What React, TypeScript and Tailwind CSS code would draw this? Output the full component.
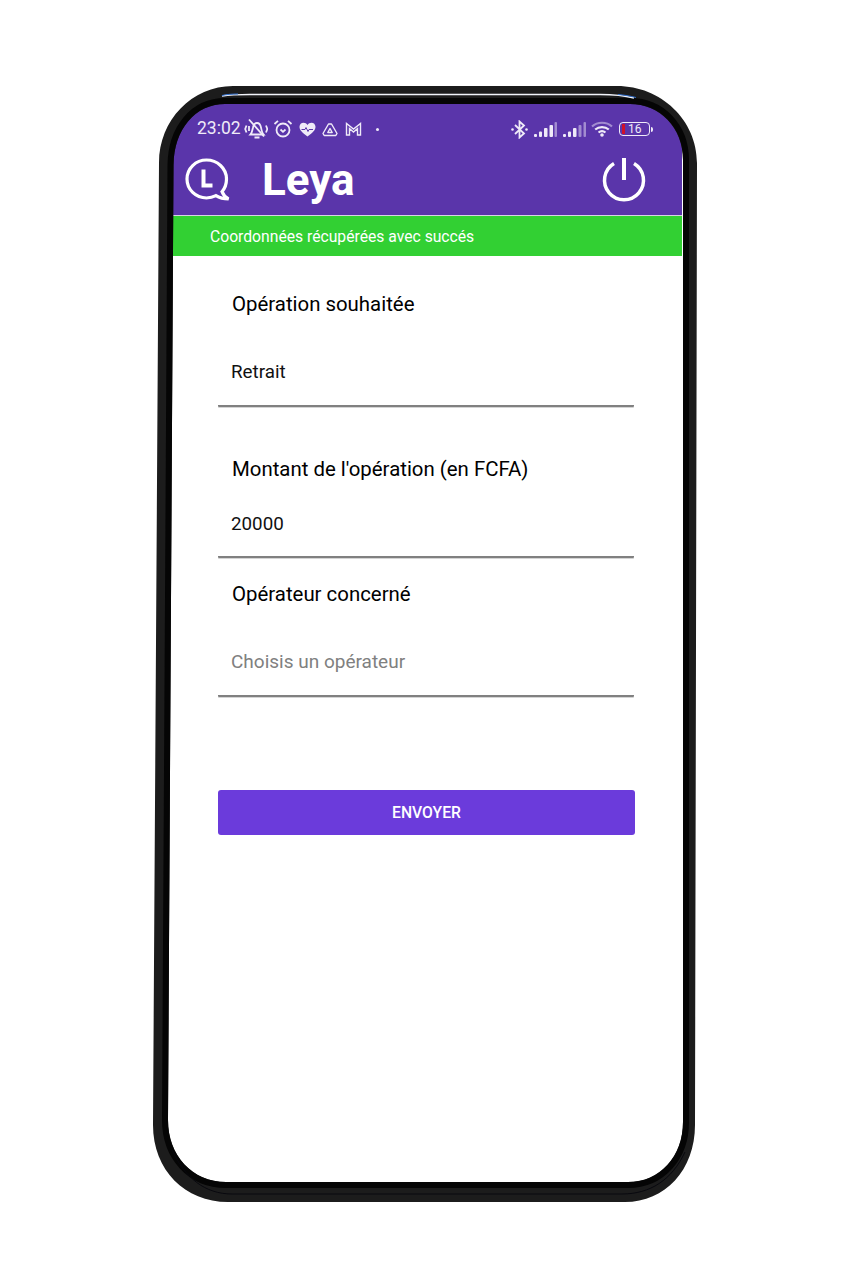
const font = { fontFamily: "Roboto, sans-serif" };

const StatusIcons = () => (
  <div className="flex items-center h-[48px] pt-[2px] pl-[24px] pr-[29px] text-white">
    <span className="text-[17.500px] leading-none text-[#efeaf8]">23:02</span>
    <svg width="24" height="22" viewBox="0 0 24 22" fill="none" stroke="#efeaf8" strokeWidth="1.800" className="ml-[3px]">
      <path d="M6.500 16.500c1.500-1.500 2-5 2.500-7 .5-2.500 2-4.500 4-4.500s3.500 2 4 4.500c.4 2 1 5.500 2.500 7z" />
      <path d="M10.500 19.500h5M5 1.500l15 17M2.500 7.500 1.200 11l1.300 3.500M5 8v5M22 7.500l1.300 3.500-1.300 3.500" />
    </svg>
    <svg width="20" height="20" viewBox="0 0 20 20" fill="none" stroke="#efeaf8" strokeWidth="1.800" className="ml-[5px]">
      <circle cx="10" cy="11" r="6.500" />
      <path d="M7.500 10.500 10 12.800l2.500-2.300M1.500 5 5 1.800M18.500 5 15 1.800" />
    </svg>
    <svg width="17" height="15" viewBox="0 0 17 15" className="ml-[6px]">
      <path d="M8.500 14.500C3 10.500.5 8 .5 4.800.5 2.300 2.400.7 4.500.7c1.700 0 3.100.8 4 2.200.9-1.400 2.300-2.200 4-2.200 2.100 0 4 1.600 4 4.100 0 3.200-2.500 5.700-8 9.700z" fill="#efeaf8" />
      <path d="M2.500 7.500h3.500l1-2 2 4 1-2h4" fill="none" stroke="#5b36aa" strokeWidth="1" />
    </svg>
    <svg width="16" height="15" viewBox="0 0 16 15" fill="none" stroke="#efeaf8" strokeWidth="1.400" strokeLinejoin="round" className="ml-[6px]">
      <path d="M6.500 2 1 11.500 2.200 13.500h11.600L15 11.500 9.500 2z" />
      <path d="M8 6.500 5.800 10.500h4.400z" />
    </svg>
    <svg width="17" height="14" viewBox="0 0 17 14" fill="none" stroke="#efeaf8" strokeWidth="1.400" className="ml-[7px]">
      <path d="M1.500 13V1.500L8.500 7l7-5.500V13h-3V6.500L8.500 10 4.500 6.500V13z" />
    </svg>
    <span className="ml-[14px] w-[3px] h-[3px] rounded-full bg-[#efeaf8]" />
    <div className="ml-auto flex items-center">
      <svg width="17" height="19" viewBox="0 0 17 19" fill="none" stroke="#efeaf8" strokeWidth="1.800">
        <path d="M4 5l9 8.500-4.500 4V1.500l4.500 4L4 14" />
        <circle cx="1.500" cy="9.500" r="1.300" fill="#efeaf8" stroke="none" />
        <circle cx="15.500" cy="9.500" r="1.300" fill="#efeaf8" stroke="none" />
      </svg>
      <svg width="23" height="15" viewBox="0 0 23 15" className="ml-[6px]">
        <rect x="0" y="12" width="3" height="3" rx="1" fill="#efeaf8" />
        <rect x="5" y="9.500" width="3" height="5.500" rx="1" fill="#efeaf8" />
        <rect x="10" y="6" width="3.500" height="9" rx="1" fill="#efeaf8" />
        <rect x="15.500" y="3" width="3.500" height="12" rx="1" fill="#efeaf8" />
        <rect x="20.500" y="0" width="2.500" height="15" rx="1" fill="#a28cd0" />
      </svg>
      <svg width="23" height="15" viewBox="0 0 23 15" className="ml-[6px]">
        <rect x="0" y="12" width="3" height="3" rx="1" fill="#efeaf8" />
        <rect x="5" y="9.500" width="3" height="5.500" rx="1" fill="#efeaf8" />
        <rect x="10" y="6" width="3.500" height="9" rx="1" fill="#efeaf8" />
        <rect x="15.500" y="3" width="3" height="12" rx="1" fill="#a28cd0" />
        <rect x="20.500" y="0" width="2.500" height="15" rx="1" fill="#a28cd0" />
      </svg>
      <svg width="22" height="16" viewBox="0 0 22 16" fill="none" strokeWidth="2.200" className="ml-[5px]">
        <path d="M1 5.500c5.500-5 14.500-5 20 0" stroke="#a28cd0" />
        <path d="M4.200 8.500c3.800-3.300 9.800-3.300 13.600 0" stroke="#efeaf8" />
        <path d="M7.500 11.500c2-1.600 5-1.600 7 0" stroke="#efeaf8" />
        <circle cx="11" cy="14" r="1.800" fill="#efeaf8" />
      </svg>
      <div className="ml-[6px] flex items-center">
        <div className="w-[31px] h-[14px] rounded-[4px] border border-[#efeaf8] flex items-center pl-[2px]">
          <span className="w-[3px] h-[10px] bg-[#d0102a]" />
          <span className="ml-[3px] text-[12px] leading-none text-[#efeaf8]">16</span>
        </div>
        <span className="ml-[1px] w-[2px] h-[5px] rounded-r-sm bg-[#efeaf8]" />
      </div>
    </div>
  </div>
);

const Logo = () => (
  <svg width="46" height="44" viewBox="0 0 46 44" fill="none" stroke="white" strokeWidth="3.200">
    <path d="M21.500 2C10.700 2 2 10.400 2 21s8.700 19 19.500 19c3.400 0 6.600-.8 9.400-2.300 3.800 2.400 8.300 3.300 12.600 3.300-3.300-1.800-5.300-4.200-6.500-7.300C40 30.300 41.500 25.800 41.500 21 41.500 10.400 32.300 2 21.500 2z" />
    <path d="M18.500 11.500V27.500h9" strokeWidth="4" />
  </svg>
);

const PowerIcon = () => (
  <svg width="46" height="46" viewBox="0 0 46 46" fill="none" stroke="white" strokeWidth="3.500" className="ml-auto">
    <path d="M13 6.500A19.500 19.500 0 1 0 33 6.500" />
    <path d="M23 1V23" strokeWidth="4" />
  </svg>
);

const Field = ({ label, value, placeholder, top, gap }: { label: string; value: string; placeholder?: boolean; top: string; gap: string }) => (
  <div className={top}>
    <div className="pl-[59px] text-[20.400px] leading-[24px] text-black">{label}</div>
    <div className={`${gap} ml-[45px] w-[416px] border-b-2 border-[#808080] rounded-b-[1px] shadow-[0_1px_0_#d4d4d4]`}>
      <div className={`pl-[13px] h-[24px] leading-[24px] ${placeholder ? "text-[19px] text-[#808080]" : "text-[18.800px] text-[#111]"}`}>{value}</div>
    </div>
  </div>
);

// bezel sits over the screen, the body is very slightly skewed in the photo
const Bezel = () => (
  <svg width="853" height="1280" viewBox="0 0 853 1280" className="absolute inset-0 pointer-events-none">
    <path
      fillRule="evenodd"
      fill="#1c1c1c"
      d="M233 86H617C661 86 697 120 697 163L695 1125C695 1170 665 1202 625 1202H228C185 1202 153 1170 153 1125L159 163C159 120 192 86 233 86Z
         M225 104H630C660 104 683 128 683 160V1122C683 1156 660 1182 628 1182H226C192 1182 168 1155 168 1120L173.500 165C174 130 195 104 225 104Z"
    />
    <path
      fill="none"
      stroke="#050505"
      strokeWidth="6"
      d="M225 101H630C662 101 686 126 686 160V1122C686 1158 662 1185 628 1185H226C190 1185 165 1157 165 1120L170.500 165C171 128 193 101 225 101Z"
    />
    <path fill="none" stroke="#08080e" strokeWidth="1" d="M172 1150C185 1178 205 1194 232 1194H622C650 1194 672 1180 685 1152" />
    <path fill="none" stroke="#f2f4fa" strokeWidth="1.500" d="M222 96C232 94.500 240 94.500 250 94.500H600C610 94.500 622 95 634 98" />
    <path fill="none" stroke="#2f6fd0" strokeWidth="1" d="M222 95.500C226 94.500 232 94 238 94M618 94.500C624 95 630 96 636 97.500" />
  </svg>
);

export default function App() {
  return (
    <div className="relative w-[853px] h-[1280px] bg-white overflow-hidden" style={font}>
      <div className="ml-[173px] mt-[104px] w-[509px] rounded-t-[44px] overflow-hidden">
        <div className="bg-[#5a35aa] h-[111px]">
          <StatusIcons />
          <div className="flex items-center h-[56px] pl-[12px] pr-[35px]">
            <Logo />
            <span className="ml-[31px] text-[44px] leading-none font-bold text-white">Leya</span>
            <PowerIcon />
          </div>
        </div>
        <div className="h-px bg-[#d8d4e4]" />
        <div className="h-[40px] bg-[#32d033] pl-[37px] text-[15.700px] leading-[42px] text-white">Coordonnées récupérées avec succés</div>
        <Field top="pt-[36px]" gap="mt-[44px] pb-[21px]" label="Opération souhaitée" value="Retrait" />
        <Field top="pt-[50px]" gap="mt-[31px] pb-[20px]" label="Montant de l'opération (en FCFA)" value="20000" />
        <Field top="pt-[24px]" gap="mt-[44px] pb-[21px]" label="Opérateur concerné" value="Choisis un opérateur" placeholder />
        <button className="block mt-[93px] ml-[45px] w-[417px] h-[45px] rounded-[3px] bg-[#6b3bdb] text-white text-[15.700px] font-medium">ENVOYER</button>
      </div>
      <Bezel />
    </div>
  );
}
